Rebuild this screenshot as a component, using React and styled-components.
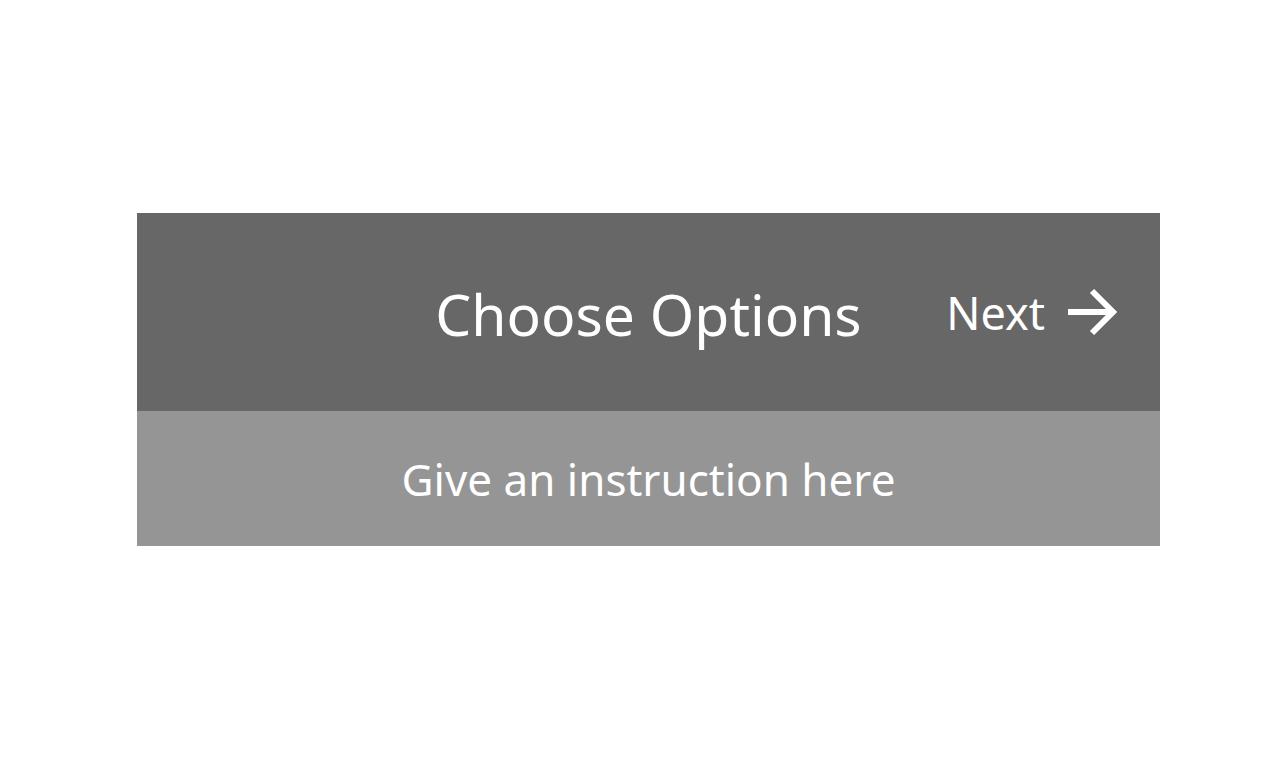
import styled, { createGlobalStyle } from "styled-components";

const GlobalStyle = createGlobalStyle`
  html, body {
    margin: 0;
    padding: 0;
    background: #ffffff;
  }
  body {
    font-family: "Noto Sans", "Open Sans", sans-serif;
  }
`;

const Page = styled.div`
  width: 1280px;
  height: 763px;
  padding: 213px 120px 0 137px;
  box-sizing: border-box;
`;

const Panel = styled.div`
  width: 1023px;
  display: flex;
  flex-direction: column;
`;

const Header = styled.div`
  height: 198px;
  background: #676767;
  display: grid;
  grid-template-columns: 1fr auto 1fr;
  align-items: center;
  padding: 0 42px 0 42px;
  box-sizing: border-box;
  color: #ffffff;
`;

const Title = styled.h1`
  grid-column: 2;
  margin: 0;
  font-size: 57px;
  font-weight: 400;
  line-height: 1;
  transform: translateY(2px);
`;

const NextButton = styled.button`
  grid-column: 3;
  justify-self: end;
  display: flex;
  align-items: center;
  gap: 21px;
  background: none;
  border: 0;
  padding: 0;
  color: inherit;
  font-family: inherit;
  font-size: 45px;
  line-height: 1;
  cursor: pointer;
`;

const Instruction = styled.div`
  height: 135px;
  background: #959595;
  color: #ffffff;
  display: flex;
  align-items: center;
  justify-content: center;
  font-size: 44px;
  line-height: 1;
`;

const ArrowIcon = () => (
  <svg width="52" height="50" viewBox="0 0 52 50" fill="none">
    <path
      d="M2 25 H47 M26 4 L47 25 L26 46"
      stroke="#ffffff"
      strokeWidth="6"
      strokeLinecap="butt"
      strokeLinejoin="miter"
    />
  </svg>
);

export default function App() {
  return (
    <>
      <GlobalStyle />
      <Page>
        <Panel>
          <Header>
            <Title>Choose Options</Title>
            <NextButton>
              Next
              <ArrowIcon />
            </NextButton>
          </Header>
          <Instruction>Give an instruction here</Instruction>
        </Panel>
      </Page>
    </>
  );
}
